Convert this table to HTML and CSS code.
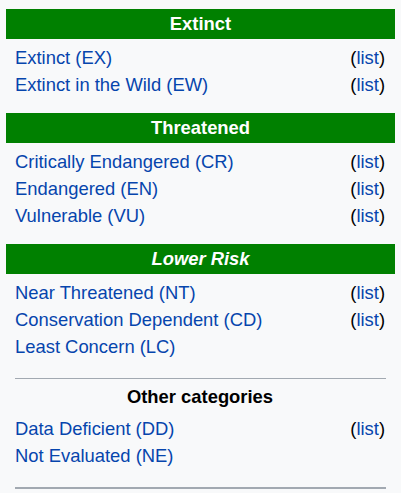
FILE: index.html
```html
<!DOCTYPE html>
<html>
<head>
<meta charset="utf-8">
<link rel="stylesheet" href="styles.css">
</head>
<body>
<div class="box">
  <div class="section">
    <div class="head">Extinct</div>
    <div class="rows">
      <div class="row"><a class="lnk">Extinct (EX)</a><span class="lst">(<a class="lnk">list</a>)</span></div>
      <div class="row"><a class="lnk">Extinct in the Wild (EW)</a><span class="lst">(<a class="lnk">list</a>)</span></div>
    </div>
  </div>
  <div class="section">
    <div class="head">Threatened</div>
    <div class="rows">
      <div class="row"><a class="lnk">Critically Endangered (CR)</a><span class="lst">(<a class="lnk">list</a>)</span></div>
      <div class="row"><a class="lnk">Endangered (EN)</a><span class="lst">(<a class="lnk">list</a>)</span></div>
      <div class="row"><a class="lnk">Vulnerable (VU)</a><span class="lst">(<a class="lnk">list</a>)</span></div>
    </div>
  </div>
  <div class="section">
    <div class="head italic">Lower Risk</div>
    <div class="rows">
      <div class="row"><a class="lnk">Near Threatened (NT)</a><span class="lst">(<a class="lnk">list</a>)</span></div>
      <div class="row"><a class="lnk">Conservation Dependent (CD)</a><span class="lst">(<a class="lnk">list</a>)</span></div>
      <div class="row"><a class="lnk">Least Concern (LC)</a></div>
    </div>
  </div>
  <div class="other">
    <div class="other-title">Other categories</div>
    <div class="other-rows">
      <div class="row"><a class="lnk">Data Deficient (DD)</a><span class="lst">(<a class="lnk">list</a>)</span></div>
      <div class="row"><a class="lnk">Not Evaluated (NE)</a></div>
    </div>
  </div>
</div>
</body>
</html>
```
FILE: styles.css
```css
html, body {
  margin: 0;
  padding: 0;
  background: #f8f9fa;
}
body {
  font-family: "Liberation Sans", Arial, sans-serif;
  font-size: 18.4px;
  color: #202122;
}
.box {
  margin: 9px 6px 0;
  display: flex;
  flex-direction: column;
}
.section {
  margin-bottom: 15px;
}
.head {
  background: #008000;
  color: #fff;
  font-weight: bold;
  text-align: center;
  height: 30px;
  line-height: 30px;
}
.italic {
  font-style: italic;
}
.rows {
  padding: 5px 10px 0 9px;
}
.row {
  display: flex;
  justify-content: space-between;
  line-height: 27px;
}
.lnk {
  color: #0645ad;
  text-decoration: none;
}
.lst {
  color: #000;
}
.other {
  margin: 3px 9px 0;
  border-top: 1px solid #a2a9b1;
  border-bottom: 2px solid #a2a9b1;
  padding: 4px 1px 18px 0;
}
.other-title {
  text-align: center;
  font-weight: bold;
  color: #000;
  line-height: 27px;
  margin-bottom: 5px;
}
```
